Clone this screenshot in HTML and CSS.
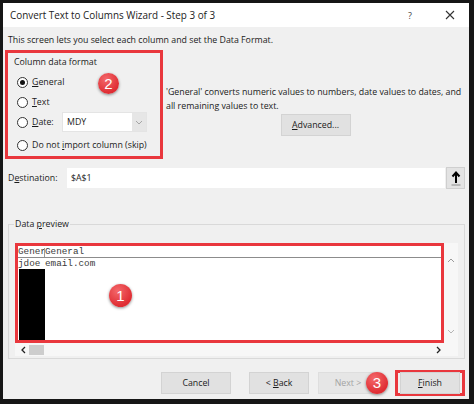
FILE: index.html
```html
<!DOCTYPE html>
<html>
<head>
  <title>Convert Text to Columns Wizard - Step 3 of 3</title>
  <link rel="stylesheet" href="styles.css">
</head>
<body>
  <div class="window">
    <div class="titlebar">
      <span class="title">Convert Text to Columns Wizard - Step 3 of 3</span>
      <span class="tb-btn help">?</span>
      <span class="tb-btn">
        <svg width="10" height="10" viewBox="0 0 10 10"><path d="M1 1L9 9M9 1L1 9" stroke="#333" stroke-width="1.1" fill="none"/></svg>
      </span>
    </div>

    <div class="content">
      <p class="intro">This screen lets you select each column and set the Data Format.</p>

      <div class="format-row">
        <!-- column format choices -->
        <div class="format-box mark">
          <div class="caption">Column data format</div>
          <label class="radio"><span class="dot on"></span><span><u>G</u>eneral</span></label>
          <label class="radio"><span class="dot"></span><span><u>T</u>ext</span></label>
          <label class="radio"><span class="dot"></span><span class="date-label"><u>D</u>ate:</span>
            <span class="select">
              <span class="select-value">MDY</span>
              <span class="select-arrow">
                <svg width="8" height="5" viewBox="0 0 8 5"><path d="M1 1L4 4L7 1" stroke="#a6a6a6" stroke-width="1" fill="none"/></svg>
              </span>
            </span>
          </label>
          <label class="radio skip"><span class="dot"></span><span>Do not <u>i</u>mport column (skip)</span></label>
          <span class="badge badge-2">2</span>
        </div>

        <div class="notes">
          <p>'General' converts numeric values to numbers, date values to dates, and all remaining values to text.</p>
          <button class="btn advanced"><u>A</u>dvanced...</button>
        </div>
      </div>

      <div class="dest-row">
        <span class="dest-label">D<u>e</u>stination:</span>
        <span class="dest-input">$A$1</span>
        <span class="dest-btn">
          <svg width="12" height="16" viewBox="0 0 12 16"><path d="M6 13V3M2.5 6.5L6 2.5L9.5 6.5" stroke="#000" stroke-width="2" fill="none"/><path d="M1.5 15H10.5" stroke="#8a8a8a" stroke-width="1"/></svg>
        </span>
      </div>

      <fieldset class="preview-group">
        <legend>Data <u>p</u>review</legend>
        <div class="preview">
          <div class="preview-body mark">
            <div class="row head">
              <span class="cell first">Gener</span><span class="cell">General</span>
            </div>
            <div class="row data">
              <span class="cell first hit">jdoe </span><span class="cell">email.com</span>
            </div>
            <span class="badge badge-1">1</span>
          </div>
          <div class="vscroll">
            <svg width="8" height="5" viewBox="0 0 8 5"><path d="M1 4L4 1L7 4" stroke="#9a9a9a" stroke-width="1" fill="none"/></svg>
            <svg width="8" height="5" viewBox="0 0 8 5"><path d="M1 1L4 4L7 1" stroke="#b5b5b5" stroke-width="1" fill="none"/></svg>
          </div>
          <div class="hscroll">
            <svg width="5" height="8" viewBox="0 0 5 8"><path d="M4 1L1 4L4 7" stroke="#222" stroke-width="1.3" fill="none"/></svg>
            <span class="thumb"></span>
            <svg class="right" width="5" height="8" viewBox="0 0 5 8"><path d="M1 1L4 4L1 7" stroke="#222" stroke-width="1.3" fill="none"/></svg>
          </div>
        </div>
      </fieldset>

      <div class="actions">
        <button class="btn cancel">Cancel</button>
        <button class="btn back">&lt; <u>B</u>ack</button>
        <button class="btn next" disabled>Next &gt;</button>
        <span class="badge badge-3">3</span>
        <span class="finish-box mark">
          <button class="btn finish"><u>F</u>inish</button>
        </span>
      </div>
    </div>
  </div>
</body>
</html>
```

FILE: styles.css
```css
body{
	margin:0;
	font-family:"Open Sans", "Noto Sans", sans-serif;
	font-size:8.8px;
	color:#1b1b1b;
}

u{
	text-decoration-thickness:1px;
	text-underline-offset:1px;
}

.window{
	width:474px;
	height:404px;
	box-sizing:border-box;
	border-style:solid;
	border-color:#161616;
	border-width:3px 5px 5px 3px;
	background:#f0f0f0;
	display:flex;
	flex-direction:column;
}

	/* title bar */
	.titlebar{
		height:24px;
		flex:none;
		background:#fff;
		display:flex;
		align-items:center;
		padding:0 9px 0 7px;
	}

		.title{
			font-size:9.9px;
			color:#222;
		}

		.tb-btn{
			width:20px;
			display:flex;
			justify-content:center;
			color:#444;
			font-size:9px;
		}

		.help{
			margin-left:auto;
			margin-right:20px;
		}

	.content{
		flex:1;
		padding:0 4px 0 2px;
	}

		.intro{
			margin:6px 0 0 3px;
			line-height:14px;
		}

/* red callout frames */
.mark{
	border:3px solid #e9373d;
	box-sizing:border-box;
}

.badge{
	position:absolute;
	width:21px;
	height:21px;
	border-radius:50%;
	background:radial-gradient(circle at 38% 30%, #f4686b, #df2d33 70%);
	box-shadow:0 1px 3px rgba(0,0,0,.45);
	color:#fff;
	font-family:"Liberation Sans", Arial, sans-serif;
	font-size:15px;
	line-height:21px;
	text-align:center;
}

/* column data format */
.format-row{
	display:flex;
	margin-top:3px;
}

	.format-box{
		position:relative;
		width:158px;
		height:109px;
		padding:3px 0 0 6px;
	}

		.caption{
			line-height:13px;
			margin-bottom:3px;
		}

		.radio{
			display:flex;
			align-items:center;
			height:20px;
			padding-left:3px;
		}

		.radio.skip{
			margin-top:3px;
		}

			.dot{
				width:11px;
				height:11px;
				box-sizing:border-box;
				border:1px solid #333;
				border-radius:50%;
				margin-right:4px;
				display:flex;
				align-items:center;
				justify-content:center;
				background:#fff;
			}

			.dot.on::after{
				content:"";
				width:5px;
				height:5px;
				border-radius:50%;
				background:#111;
			}

			.date-label{
				width:30px;
			}

			.select{
				width:85px;
				height:20px;
				box-sizing:border-box;
				background:#fff;
				border:1px solid #e4e4e4;
				display:flex;
			}

				.select-value{
					flex:1;
					padding-left:4px;
					line-height:18px;
				}

				.select-arrow{
					width:14px;
					background:#e6e6e6;
					display:flex;
					align-items:center;
					justify-content:center;
				}

		.badge-2{
			left:90px;
			top:20px;
		}

	.notes{
		flex:1;
		margin:35px 0 0 3px;
		display:flex;
		flex-direction:column;
		align-items:center;
	}

		.notes p{
			margin:0;
			line-height:14px;
			align-self:stretch;
		}

/* buttons */
.btn{
	font:inherit;
	color:#1b1b1b;
	height:22px;
	background:#e1e1e1;
	border:1px solid #d3d3d3;
	padding:0;
}

	.advanced{
		width:70px;
		margin-top:1px;
	}

/* destination */
.dest-row{
	display:flex;
	align-items:center;
	margin-top:8px;
	height:22px;
}

	.dest-label{
		width:59px;
		padding-left:3px;
	}

	.dest-input{
		flex:1;
		height:20px;
		line-height:20px;
		background:#fff;
		padding-left:4px;
	}

	.dest-btn{
		width:19px;
		height:22px;
		margin-left:1px;
		box-sizing:border-box;
		background:#e3e3e3;
		border:1px solid #cfcfcf;
		display:flex;
		align-items:center;
		justify-content:center;
	}

/* data preview */
.preview-group{
	margin:29px 0 0 3px;
	padding:0 6px;
	height:141px;
	box-sizing:border-box;
	border:1px solid #d9d9d9;
}

	.preview-group legend{
		padding:0 1px;
		margin-left:-1px;
		line-height:12px;
	}

	.preview{
		display:grid;
		grid-template-columns:1fr 14px;
		grid-template-rows:100px 13px;
		margin-top:13px;
		background:#f7f7f7;
	}

		.preview-body{
			position:relative;
			font-family:"Liberation Mono", "Courier New", monospace;
			font-size:9.3px;
			color:#3a3a3a;
			overflow:hidden;
			/* selected first column */
			background:#fff linear-gradient(to bottom, transparent 12px, #000 12px) 1px 0 / 26px 100% no-repeat;
		}

			.row{
				display:flex;
				height:11px;
				line-height:11px;
			}

			.row.head{
				height:12px;
				box-sizing:border-box;
				border-bottom:1px solid #8c8c8c;
				background:#fff;
			}

				.cell.first{
					position:relative;
					width:27px;
					white-space:pre;
					overflow:hidden;
				}

				.head .cell.first::after{
					content:"";
					position:absolute;
					right:0;
					top:2px;
					bottom:0;
					border-right:1px solid #9a9a9a;
				}

				.cell.hit{
					background:#fff;
				}

			.badge-1{
				width:23px;
				height:23px;
				line-height:23px;
				left:91px;
				top:38px;
			}

		.vscroll{
			display:flex;
			flex-direction:column;
			justify-content:space-between;
			align-items:center;
			padding:15px 0 9px;
		}

		.hscroll{
			display:flex;
			align-items:center;
			padding-left:6px;
		}

			.thumb{
				width:15px;
				height:10px;
				background:#cdcdcd;
				margin-left:3px;
			}

			.hscroll .right{
				margin-left:auto;
				margin-right:3px;
			}

/* wizard buttons */
.actions{
	position:relative;
	display:flex;
	justify-content:flex-end;
	align-items:center;
	margin-top:11px;
	height:26px;
}

	.cancel{
		width:70px;
	}

	.back{
		width:60px;
		margin-left:18px;
	}

	.next{
		width:60px;
		margin-left:9px;
		color:#a3a3a3;
		background:#e6e6e6;
		border-color:#dedede;
	}

	.badge-3{
		width:22px;
		height:22px;
		line-height:22px;
		left:361px;
		top:2px;
	}

	.finish-box{
		margin-left:17px;
		padding:0 2px;
		height:26px;
		display:flex;
		align-items:center;
	}

		.finish{
			width:60px;
		}
```
